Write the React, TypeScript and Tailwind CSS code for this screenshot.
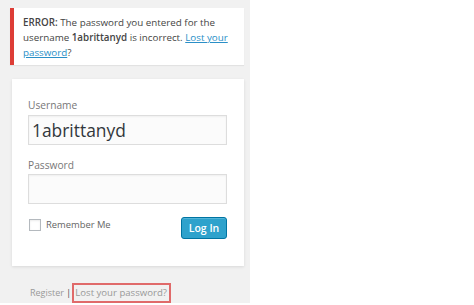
import React from 'react';

const font = { fontFamily: '"Open Sans", "Noto Sans", sans-serif' };

const App: React.FC = () => {
    return (
        <div className="flex w-[474px] h-[305px] bg-white" style={font}>
            {/* Login column */}
            <div className="w-[250px] h-[303px] bg-[#f1f1f1] pt-[8px] pl-[10px] pr-[6px] flex flex-col">
                <div className="bg-white border-l-4 border-[#dd3d36] pl-[9px] pr-[8px] pt-[7px] pb-[5px] h-[57px] text-[9.8px] leading-[15px] text-[#444] shadow-[0_1px_1px_rgba(0,0,0,0.06)]">
                    <strong className="font-semibold">ERROR:</strong> The password you entered for the username{' '}
                    <strong className="font-semibold">1abrittanyd</strong> is incorrect.{' '}
                    <a className="text-[#2a8fc7] underline">Lost your password</a>?
                </div>

                <form className="mt-[14px] ml-[2px] w-[232px] h-[188px] bg-white pt-[18px] pl-[16px] pr-[17px] shadow-[0_1px_3px_rgba(0,0,0,0.10)]">
                    <label className="block text-[10.2px] leading-[16px] text-[#777]">Username</label>
                    <div className="mt-[2px] h-[30px] border border-[#ddd] bg-[#fbfbfb] pl-[3px] text-[17.4px] leading-[28px] text-[#32373c] shadow-[inset_0_1px_2px_rgba(0,0,0,0.05)]">
                        1abrittanyd
                    </div>

                    <label className="block mt-[12px] text-[10.2px] leading-[16px] text-[#777]">Password</label>
                    <div className="mt-[1px] h-[30px] border border-[#ddd] bg-[#fbfbfb] shadow-[inset_0_1px_2px_rgba(0,0,0,0.05)]" />

                    <div className="mt-[13px] flex items-start justify-between">
                        <div className="flex items-center gap-[5px] mt-[2px] pl-[1px]">
                            <span className="w-[12px] h-[12px] border border-[#b4b9be] bg-white shadow-[inset_0_1px_2px_rgba(0,0,0,0.08)]" />
                            <span className="text-[9.4px] leading-[12px] text-[#666]">Remember Me</span>
                        </div>
                        <button
                            type="button"
                            className="w-[46px] h-[22px] rounded-[3px] bg-[#2ea2cc] border border-[#0074a2] text-white text-[10.5px] font-semibold leading-[20px] shadow-[inset_0_1px_0_rgba(120,200,230,0.5)]"
                        >
                            Log In
                        </button>
                    </div>
                </form>

                <div className="mt-[17px] pl-[20px] flex items-center text-[9.6px] leading-[16px] text-[#999]">
                    <span className="text-[9px]">Register</span>
                    <span className="ml-[2px] mr-[1px] text-[#555]">|</span>
                    <span className="border-2 border-[#e06a6a] pl-[1px] h-[20px] leading-[16px] w-[99px] whitespace-nowrap">Lost your password?</span>
                </div>
            </div>
        </div>
    );
};

export default App;
